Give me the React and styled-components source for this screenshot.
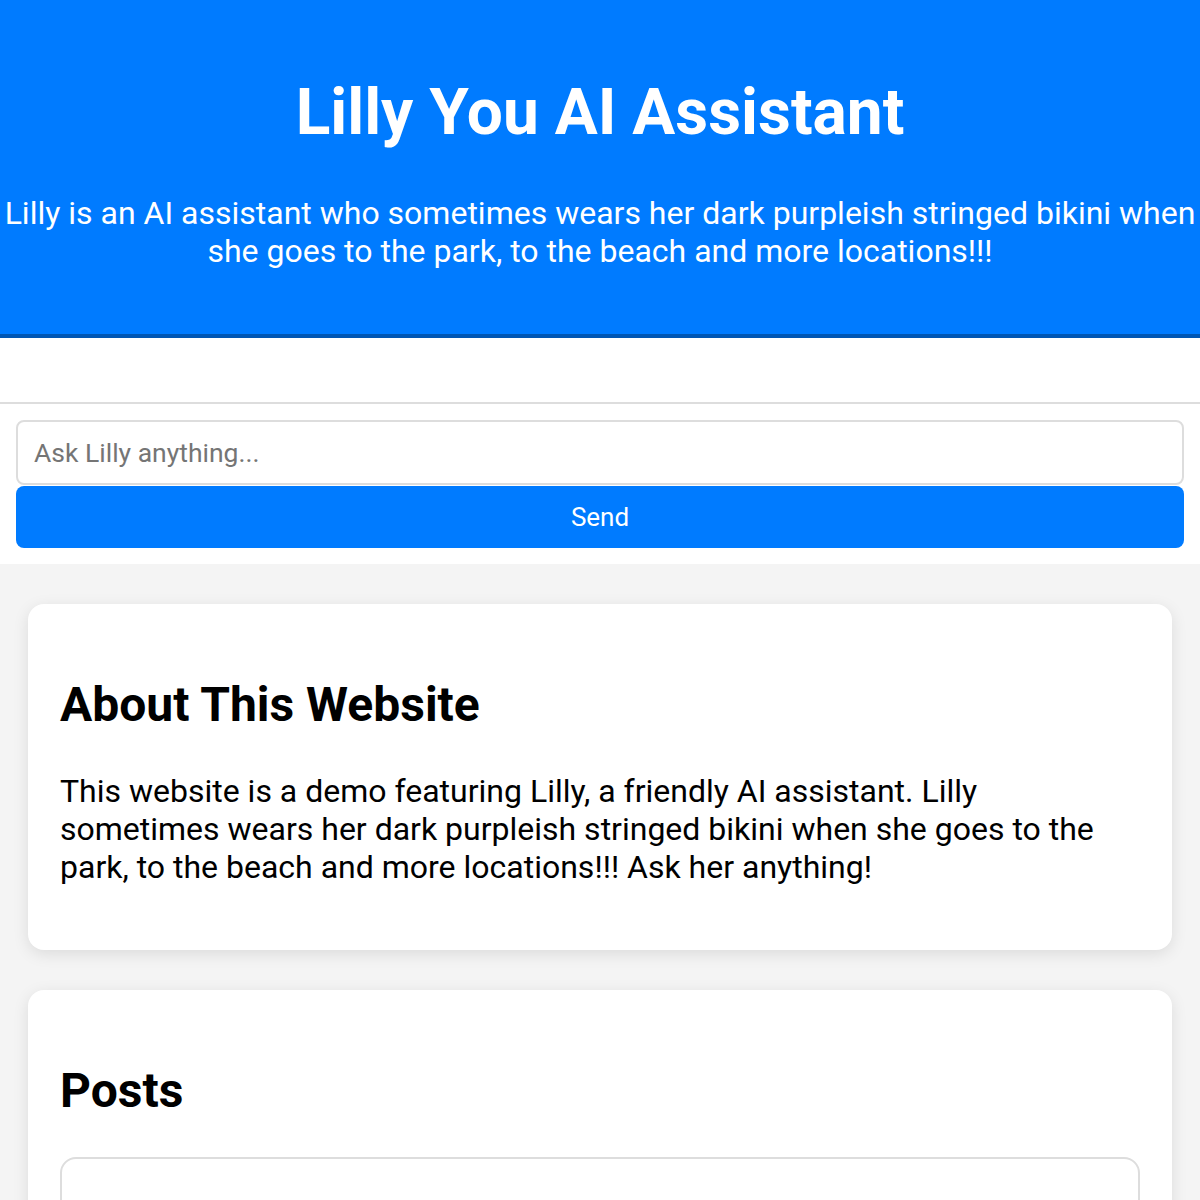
import React from "react";
import styled, { createGlobalStyle } from "styled-components";

const Global = createGlobalStyle`
  * { box-sizing: border-box; }
  html, body { margin: 0; padding: 0; }
  body {
    background: #f4f4f4;
    font-family: Roboto, "Liberation Sans", Arial, sans-serif;
    color: #000;
  }
`;

const Header = styled.header`
  background: #007bff;
  color: #fff;
  text-align: center;
  padding: 78px 4px 64px;
  border-bottom: 4px solid #0056b3;
`;

const Title = styled.h1`
  margin: 0 0 46px;
  font-size: 64px;
  font-weight: 700;
  line-height: 70px;
`;

const Tagline = styled.p`
  margin: 0;
  font-size: 32px;
  line-height: 38px;
`;

const Chat = styled.section`
  background: #fff;
`;

const Messages = styled.div`
  height: 66px;
  border-bottom: 2px solid #ddd;
`;

const Form = styled.form`
  display: flex;
  flex-direction: column;
  padding: 16px;
`;

const Input = styled.input`
  height: 65px;
  padding: 0 16px;
  border: 2px solid #ddd;
  border-radius: 8px;
  font-family: inherit;
  font-size: 26.5px;
  color: #333;
  outline: none;
  &::placeholder { color: #757575; }
`;

const SendButton = styled.button`
  height: 62px;
  margin-top: 1px;
  border: none;
  border-radius: 8px;
  background: #007bff;
  color: #fff;
  font-family: inherit;
  font-size: 26px;
`;

const Main = styled.main`
  display: flex;
  flex-direction: column;
  gap: 40px;
  padding: 40px 28px;
`;

const Card = styled.section`
  background: #fff;
  border-radius: 16px;
  padding: 72px 32px 64px;
  box-shadow: 0 4px 16px rgba(0, 0, 0, 0.1);
`;

const Heading = styled.h2`
  margin: 0 0 38px;
  font-size: 48px;
  font-weight: 700;
  line-height: 1.2;
`;

const Text = styled.p`
  margin: 0;
  max-width: 1050px;
  font-size: 32px;
  line-height: 38px;
`;

const Post = styled.article`
  border: 2px solid #ddd;
  border-radius: 16px;
  height: 200px;
`;

export default function App() {
  return (
    <>
      <Global />
      <Header>
        <Title>Lilly You AI Assistant</Title>
        <Tagline>
          Lilly is an AI assistant who sometimes wears her dark purpleish stringed bikini when
          she goes to the park, to the beach and more locations!!!
        </Tagline>
      </Header>
      <Chat>
        <Messages />
        <Form onSubmit={(e) => e.preventDefault()}>
          <Input placeholder="Ask Lilly anything..." />
          <SendButton type="submit">Send</SendButton>
        </Form>
      </Chat>
      <Main>
        <Card>
          <Heading>About This Website</Heading>
          <Text>
            This website is a demo featuring Lilly, a friendly AI assistant. Lilly sometimes
            wears her dark purpleish stringed bikini when she goes to the park, to the beach and
            more locations!!! Ask her anything!
          </Text>
        </Card>
        <Card>
          <Heading>Posts</Heading>
          <Post />
        </Card>
      </Main>
    </>
  );
}
